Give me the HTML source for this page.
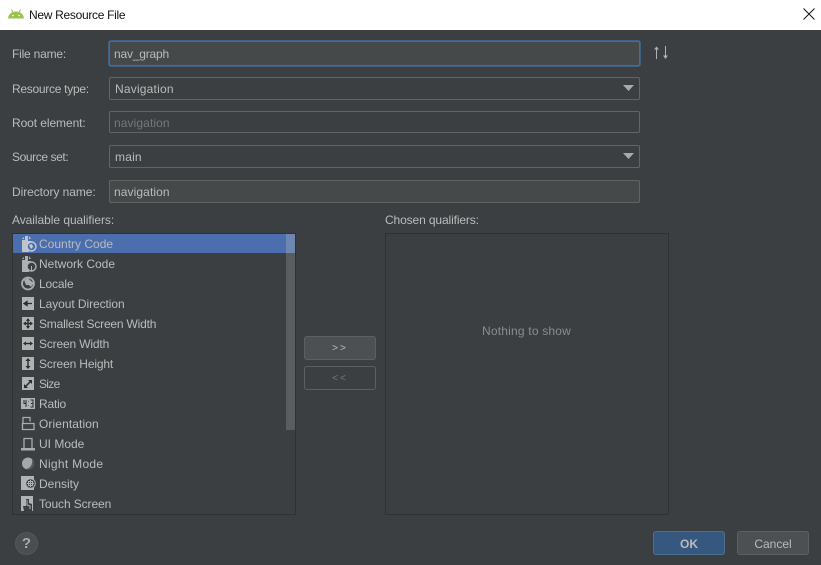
<!DOCTYPE html>
<html><head><meta charset="utf-8"><style>
html,body{margin:0;padding:0;width:821px;height:565px;overflow:hidden;background:#3c3f41}
body{position:relative;font-family:"Liberation Sans",sans-serif;font-size:12px;color:#bbbbbb}
.a,.l,.f,.r,.b{position:absolute;box-sizing:border-box}
.l{left:12px;line-height:16px;white-space:nowrap}
.f{left:109px;width:531px;height:23px;border:1px solid #646464;border-radius:2px;line-height:23px;padding-left:5px}
.in{background:#45494a}
.r{left:14px;width:272px;height:20px;line-height:20px;padding-left:25px;white-space:nowrap}
.r svg{position:absolute;left:7px;top:2px}
.b{width:72px;height:24px;border:1px solid #5e6060;border-radius:3px;text-align:center;line-height:24px}
</style></head><body>
<div class="a" style="left:0;top:0;width:821px;height:30px;background:#fff"></div>
<svg class="a" style="left:8px;top:9px" width="16" height="10" viewBox="0 0 16 10"><path d="M0 9.500C.4 5.500 3.400 2.500 8 2.500s7.600 3 8 7z" fill="#9cc14f"/><path d="M3.500 .5 5 3.500M12.500 .5 11 3.500" stroke="#9cc14f" stroke-width="1"/><circle cx="5" cy="6.500" r=".8" fill="#fff"/><circle cx="11" cy="6.500" r=".8" fill="#fff"/></svg>
<div class="a" style="left:29px;top:7px;color:#111;line-height:16px;white-space:nowrap;letter-spacing:-.3px">New Resource File</div>
<svg class="a" style="left:803px;top:8px" width="12" height="12"><path d="M.5.500 11.500 11.500M11.500.500.500 11.500" stroke="#111" stroke-width="1"/></svg>

<div class="l" style="top:46px;letter-spacing:-.2px">File name:</div>
<div class="l" style="top:81px;letter-spacing:-.28px">Resource type:</div>
<div class="l" style="top:115px;letter-spacing:-.08px">Root element:</div>
<div class="l" style="top:149px;letter-spacing:-.4px">Source set:</div>
<div class="l" style="top:184px;letter-spacing:-.07px">Directory name:</div>
<div class="l" style="top:212px;letter-spacing:-.05px">Available qualifiers:</div>
<div class="l" style="top:212px;left:385px;letter-spacing:-.12px">Chosen qualifiers:</div>

<div class="f in" style="left:108px;top:40px;width:533px;height:27px;border:2px solid #3d6185;outline:1px solid #466d94;outline-offset:-2px;line-height:25px;padding-left:4px;border-radius:3px;letter-spacing:-.2px">nav_graph</div>
<div class="f" style="top:77px;letter-spacing:.2px">Navigation</div>
<div class="f" style="top:111px;height:22px;color:#777;padding-left:4px;line-height:22px;letter-spacing:.1px">navigation</div>
<div class="f" style="top:145px;letter-spacing:.2px">main</div>
<div class="f in" style="top:180px;padding-left:4px;letter-spacing:.1px">navigation</div>
<svg class="a" style="left:623px;top:85px" width="12" height="7"><path d="M0 0H11L5.500 6z" fill="#aaa"/></svg>
<svg class="a" style="left:623px;top:153px" width="12" height="7"><path d="M0 0H11L5.500 6z" fill="#aaa"/></svg>
<svg class="a" style="left:653px;top:45px" width="17" height="15" fill="none" stroke="#afb1b3"><path d="M3.500 14V2"/><path d="M1 4.500h5L3.500 1.500z" fill="#afb1b3" stroke="none"/><path d="M12.500 1V12"/><path d="M10 10.500h5L12.500 14z" fill="#afb1b3" stroke="none"/></svg>

<div class="a" style="left:12px;top:233px;width:284px;height:282px;border:1px solid #2f3132"></div>
<div class="a" style="left:385px;top:233px;width:284px;height:282px;border:1px solid #2f3132"></div>
<div class="a" style="left:482px;top:323px;color:#8a8d8e;line-height:16px;white-space:nowrap;letter-spacing:.2px">Nothing to show</div>
<div class="a" style="left:13px;top:234px;width:282px;height:19px;background:#4b6eaf"></div>

<div class="r" style="top:234px"><svg width="16" height="16"><path d="M1 3 3 1V3zM4 0H7V5H10V6H1V4H4zM8 0 10 3H8z" fill="#c0c4ca"/><path d="M1 6H8V16H1z" fill="#c0c4ca"/><circle cx="10.500" cy="10.500" r="4.500" fill="#4b6eaf" stroke="#c6cbd3" stroke-width="1.400"/><path d="M8 9 11 8 12 11 10 13z" fill="#c6cbd3"/></svg>Country Code</div>
<div class="r" style="top:254px"><svg width="16" height="16"><path d="M1 3 3 1V3zM4 0H7V5H10V6H1V4H4zM8 0 10 3H8z" fill="#aeb0b2"/><path d="M1 6H8V16H1z" fill="#aeb0b2"/><circle cx="10.500" cy="10.500" r="4.500" fill="#3c3f41" stroke="#aeb0b2" stroke-width="1.400"/><path d="M10.500 10V15" stroke="#aeb0b2"/></svg>Network Code</div>
<div class="r" style="top:274px;letter-spacing:-.15px"><svg width="16" height="16"><circle cx="7" cy="7.500" r="6" fill="#3c3f41" stroke="#a9abad" stroke-width="1.800"/><path d="M3 4 7 2 10 5 13 7 10 11 8 9 5 9z" fill="#a9abad"/></svg>Locale</div>
<div class="r" style="top:294px;letter-spacing:-.07px"><svg width="16" height="16"><path d="M1 1H13V14H1z" fill="#b0b2b3"/><path d="M3 7.500H11M3 7.500 6 5.500V9.500z" stroke="#2b2b2b" stroke-width="1.300" fill="#2b2b2b"/></svg>Layout Direction</div>
<div class="r" style="top:314px;letter-spacing:-.2px"><svg width="16" height="16"><path d="M1 1H13V14H1z" fill="#b0b2b3"/><path d="M7 2 9 5H5zM7 13 9 10H5zM2 7.500 5 5.500V9.500zM12 7.500 9 5.500V9.500z" fill="#2b2b2b"/><path d="M7 3V12M3 7.500H11" stroke="#2b2b2b" stroke-width="1.400"/></svg>Smallest Screen Width</div>
<div class="r" style="top:334px;letter-spacing:-.16px"><svg width="16" height="16"><path d="M1 1H13V14H1z" fill="#b0b2b3"/><path d="M3 7.500H11" stroke="#2b2b2b" stroke-width="1.400"/><path d="M2 7.500 5 5.500V9.500zM12 7.500 9 5.500V9.500z" fill="#2b2b2b"/></svg>Screen Width</div>
<div class="r" style="top:354px;letter-spacing:-.15px"><svg width="16" height="16"><path d="M1 1H13V14H1z" fill="#b0b2b3"/><path d="M7 3V12" stroke="#2b2b2b" stroke-width="1.400"/><path d="M7 2 9.500 5H4.500zM7 13 9.500 10H4.500z" fill="#2b2b2b"/></svg>Screen Height</div>
<div class="r" style="top:374px;letter-spacing:-.7px"><svg width="16" height="16"><path d="M1 1H13V14H1z" fill="#b0b2b3"/><path d="M4 11 10 5" stroke="#2b2b2b" stroke-width="1.500"/><path d="M11 4V8L7 4zM3 12V8L7 12z" fill="#2b2b2b"/></svg>Size</div>
<div class="r" style="top:394px;letter-spacing:-.2px"><svg width="16" height="16"><path d="M0 2H14V13H0z" fill="#b0b2b3"/><path d="M3 4V7.500H5M5 4V11M7.500 5.500V6M7.500 9V9.500M9.500 4H12V11H9.500M10 7.500H12" stroke="#2b2b2b" fill="none"/></svg>Ratio</div>
<div class="r" style="top:414px;letter-spacing:.1px"><svg width="16" height="16" fill="none" stroke="#a9abad" stroke-width="1.300"><path d="M2 7V1.500H9V5.500"/><path d="M1.500 7.500H13V13.500H1.500z"/></svg>Orientation</div>
<div class="r" style="top:434px"><svg width="16" height="16"><path d="M3 12V2.500H11V12" fill="none" stroke="#a9abad" stroke-width="1.300"/><path d="M0 12H14V14.500H0z" fill="#a9abad"/></svg>UI Mode</div>
<div class="r" style="top:454px;letter-spacing:.3px"><svg width="16" height="16"><circle cx="7" cy="7.500" r="6" fill="#a5a7a9"/><path d="M4 13C9 13 12 9 11 3 14 6 14 10 11 12.500 8.500 14.500 6 14 4 13z" fill="#55585a"/></svg>Night Mode</div>
<div class="r" style="top:474px"><svg width="16" height="16"><path d="M0 0H13V14H0z" fill="#b0b2b3"/><circle cx="9.500" cy="7.500" r="4.800" fill="#3c3f41" stroke="#b0b2b3"/><path d="M9.500 4V11M6 7.500H13M7.500 5.500H11.500V9.500H7.500z" stroke="#b0b2b3" fill="none"/></svg>Density</div>
<div class="r" style="top:494px;letter-spacing:-.1px"><svg width="16" height="16"><path d="M0 0H12V15H0z" fill="#b0b2b3"/><path d="M5 3H8V7L11 8V15H3L2 10H5z" fill="#3c3f41"/><path d="M6 4V9L9 10V13" stroke="#b0b2b3" fill="none"/></svg>Touch Screen</div>

<div class="a" style="left:286px;top:234px;width:9px;height:196px;background:#5a5c5e"></div>
<div class="a" style="left:286px;top:234px;width:9px;height:19px;background:#7086b2"></div>

<div class="b" style="left:304px;top:336px;background:#4c5052;font-size:10px;letter-spacing:2px">&gt;&gt;</div>
<div class="b" style="left:304px;top:366px;color:#777;font-size:10px;letter-spacing:2px">&lt;&lt;</div>
<div class="b" style="left:653px;top:531px;background:#365880;border-color:#4c708c;font-weight:bold;color:#bbbbbb">OK</div>
<div class="b" style="left:737px;top:531px;background:#4c5052">Cancel</div>
<div class="a" style="left:15px;top:532px;width:23px;height:23px;border-radius:50%;background:#4b4e50;border:1px solid #55585a;text-align:center;line-height:21px;font-size:15px;font-weight:bold;color:#a9abad">?</div>
</body></html>
